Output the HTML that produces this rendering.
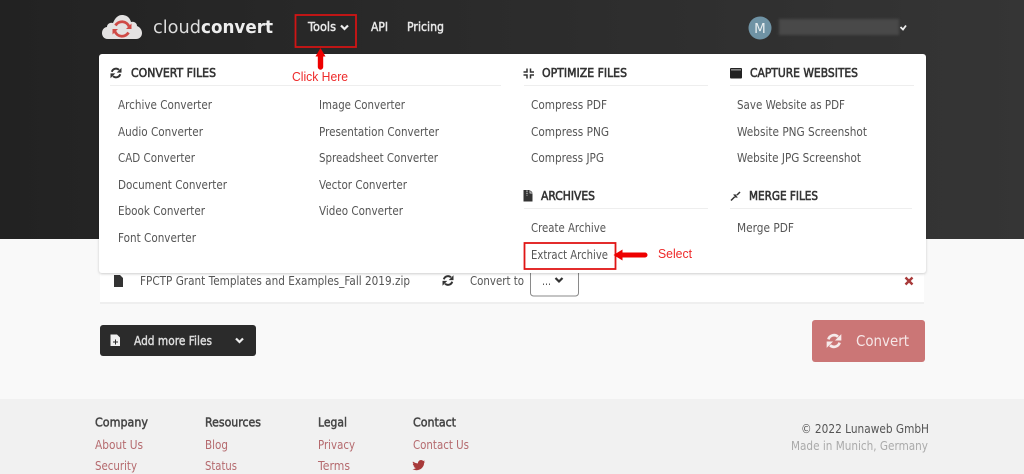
<!DOCTYPE html>
<html><head><meta charset="utf-8"><title>CloudConvert</title>
<style>
html,body{margin:0;padding:0;width:1024px;height:474px;overflow:hidden;background:#f9f9f9}
svg{display:block;filter:blur(.3px)}
text{font-family:"DejaVu Sans","Liberation Sans",sans-serif}
.i{font-size:12.5px;fill:#555}
.h{font-size:12.5px;fill:#333;stroke:#333;stroke-width:.6px}
.n{font-size:12.5px;fill:#e8e8e8;stroke:#e8e8e8;stroke-width:.5px}
.f{font-size:12.5px;fill:#b56a6e}
.fh{font-size:12.5px;fill:#444;stroke:#444;stroke-width:.5px}
.r{font-family:"Liberation Sans",sans-serif;font-size:13px;fill:#ee2a2a}
</style></head><body>
<svg width="1024" height="474" viewBox="0 0 1024 474" xmlns="http://www.w3.org/2000/svg">
<defs>
<linearGradient id="g" x1="0" x2="1" y1="0" y2="0"><stop offset="0" stop-color="#222"/><stop offset="1" stop-color="#353535"/></linearGradient>
<filter id="s" x="-2%" y="-5%" width="104%" height="110%"><feDropShadow dx="0" dy="1" stdDeviation="1.2" flood-color="#000" flood-opacity=".2"/></filter>
<filter id="b"><feGaussianBlur stdDeviation="1.2"/></filter>
<symbol id="sync" viewBox="0 0 12 12"><path d="M1.800 4.800A4.400 4.400 0 0 1 9 2.800" fill="none" stroke="currentColor" stroke-width="2"/><path d="M10.200 7.200A4.400 4.400 0 0 1 3 9.200" fill="none" stroke="currentColor" stroke-width="2"/><path d="M11.500 .8V5.600H6.700ZM.5 11.200V6.400H5.300Z" fill="currentColor"/></symbol>
</defs>
<rect width="1024" height="474" fill="#f9f9f9"/>
<rect width="1024" height="239" fill="url(#g)"/>
<rect y="399" width="1024" height="75" fill="#f1f1f1"/>

<!-- logo -->
<path d="M108 39C103 39 102 35 102 33C102 29 105 27 107 27C107 24 110 22 113 23C115 18 118 15 122 15C127 15 130 18 131 22C134 21 137 23 137 26C140 27 142 30 142 33C142 36 140 39 136 39Z" fill="#e4e2e2"/>
<path d="M115.500 25.500A7.500 7.500 0 0 1 129 26.500" fill="none" stroke="#cf4a46" stroke-width="2.800"/>
<path d="M128.500 32.500A7.500 7.500 0 0 1 115 31.500" fill="none" stroke="#cf4a46" stroke-width="2.800"/>
<path d="M131.500 23.500V29H126ZM112.500 34.500V29H118Z" fill="#cf4a46"/>
<text x="153" y="33" font-size="18" fill="#ddd" textLength="48" lengthAdjust="spacingAndGlyphs">cloud</text>
<text x="201" y="33" font-size="18" font-weight="bold" fill="#eee" textLength="72" lengthAdjust="spacingAndGlyphs">convert</text>

<!-- nav -->
<text class="n" x="308" y="31" textLength="28" lengthAdjust="spacingAndGlyphs">Tools</text>
<path d="M341 25.500l3.500 3.500 3.500-3.500" fill="none" stroke="#eee" stroke-width="2.200"/>
<text class="n" x="371" y="31" textLength="17" lengthAdjust="spacingAndGlyphs">API</text>
<text class="n" x="407" y="31" textLength="37" lengthAdjust="spacingAndGlyphs">Pricing</text>
<circle cx="760" cy="28" r="11.500" fill="#6f93a5"/>
<text x="760" y="33" font-size="13.500" fill="#e8eef0" text-anchor="middle">M</text>
<rect x="779" y="19" width="120" height="16" fill="#484848" filter="url(#b)"/>
<path d="M900.500 27l2.500 2.500 3-4" fill="none" stroke="#eee" stroke-width="1.800"/>

<!-- file row -->
<rect x="100" y="270" width="824" height="32" fill="#fff"/>
<rect x="100" y="302" width="824" height="2" fill="#efefef"/>
<path d="M114 275h6l3 3v9h-9Z" fill="#333"/>
<text class="i" x="140" y="285" textLength="270" lengthAdjust="spacingAndGlyphs">FPCTP Grant Templates and Examples_Fall 2019.zip</text>
<use href="#sync" x="442" y="274.500" width="12" height="12" color="#333"/>
<text class="i" x="470" y="285" textLength="54" lengthAdjust="spacingAndGlyphs">Convert to</text>
<rect x="530.500" y="262" width="48" height="34" rx="3" fill="#fff" stroke="#8a8a8a"/>
<text class="i" x="542" y="285" textLength="9" lengthAdjust="spacingAndGlyphs">...</text>
<path d="M555.500 278l3.500 3.500 3.500-3.500" fill="none" stroke="#333" stroke-width="2.200"/>
<path d="M905.500 277.500l7 7M912.500 277.500l-7 7" stroke="#a83a3a" stroke-width="2.400"/>

<!-- panel -->
<rect x="99" y="54" width="827" height="219" rx="3" fill="#fff" filter="url(#s)"/>
<use href="#sync" x="110" y="67" width="12" height="12" color="#333"/>
<text class="h" x="131" y="77" textLength="85" lengthAdjust="spacingAndGlyphs">CONVERT FILES</text>
<rect x="110" y="85" width="391" height="1" fill="#eee"/>
<text class="i" x="118" y="109" textLength="94" lengthAdjust="spacingAndGlyphs">Archive Converter</text>
<text class="i" x="118" y="136" textLength="85" lengthAdjust="spacingAndGlyphs">Audio Converter</text>
<text class="i" x="118" y="162" textLength="77" lengthAdjust="spacingAndGlyphs">CAD Converter</text>
<text class="i" x="118" y="189" textLength="109" lengthAdjust="spacingAndGlyphs">Document Converter</text>
<text class="i" x="118" y="215" textLength="87" lengthAdjust="spacingAndGlyphs">Ebook Converter</text>
<text class="i" x="118" y="242" textLength="78" lengthAdjust="spacingAndGlyphs">Font Converter</text>
<text class="i" x="319" y="109" textLength="86" lengthAdjust="spacingAndGlyphs">Image Converter</text>
<text class="i" x="319" y="136" textLength="120" lengthAdjust="spacingAndGlyphs">Presentation Converter</text>
<text class="i" x="319" y="162" textLength="119" lengthAdjust="spacingAndGlyphs">Spreadsheet Converter</text>
<text class="i" x="319" y="189" textLength="88" lengthAdjust="spacingAndGlyphs">Vector Converter</text>
<text class="i" x="319" y="215" textLength="84" lengthAdjust="spacingAndGlyphs">Video Converter</text>

<path d="M527 68.500v3.500h-3.500M530.500 68.500v3.500h3.500M527 78.500v-3.500h-3.500M530.500 78.500v-3.500h3.500" fill="none" stroke="#333" stroke-width="1.500"/>
<text class="h" x="542" y="77" textLength="85" lengthAdjust="spacingAndGlyphs">OPTIMIZE FILES</text>
<rect x="524" y="85" width="184" height="1" fill="#eee"/>
<text class="i" x="531" y="109" textLength="76" lengthAdjust="spacingAndGlyphs">Compress PDF</text>
<text class="i" x="531" y="136" textLength="78" lengthAdjust="spacingAndGlyphs">Compress PNG</text>
<text class="i" x="531" y="162" textLength="73" lengthAdjust="spacingAndGlyphs">Compress JPG</text>
<path d="M523.500 190h6.500l2.500 2.500v9h-9Z" fill="#333"/>
<path d="M527 190.500v5" stroke="#fff" stroke-width="1" stroke-dasharray="1.200 1"/>
<path d="M530 190v3h2.500" fill="none" stroke="#fff" stroke-width=".7"/>
<text class="h" x="541" y="200" textLength="54" lengthAdjust="spacingAndGlyphs">ARCHIVES</text>
<rect x="524" y="208" width="184" height="1" fill="#eee"/>
<text class="i" x="531" y="232" textLength="75" lengthAdjust="spacingAndGlyphs">Create Archive</text>
<text class="i" x="531" y="259" textLength="77" lengthAdjust="spacingAndGlyphs">Extract Archive</text>

<rect x="730" y="68" width="12" height="10.500" rx="1" fill="#222"/>
<rect x="731" y="69.500" width="10" height=".8" fill="#ddd"/>
<text class="h" x="750" y="77" textLength="108" lengthAdjust="spacingAndGlyphs">CAPTURE WEBSITES</text>
<rect x="730" y="85" width="184" height="1" fill="#eee"/>
<text class="i" x="737" y="109" textLength="108" lengthAdjust="spacingAndGlyphs">Save Website as PDF</text>
<text class="i" x="737" y="136" textLength="130" lengthAdjust="spacingAndGlyphs">Website PNG Screenshot</text>
<text class="i" x="737" y="162" textLength="124" lengthAdjust="spacingAndGlyphs">Website JPG Screenshot</text>
<path d="M731 200.500l3.500-3.500M737 195l3-3" stroke="#333" stroke-width="1.500"/>
<path d="M733 194.500l3.500 3.500v-3.500ZM738 197.500l-3.500-3.500v3.500Z" fill="#333"/>
<text class="h" x="749" y="200" textLength="69" lengthAdjust="spacingAndGlyphs">MERGE FILES</text>
<rect x="730" y="208" width="182" height="1" fill="#eee"/>
<text class="i" x="737" y="232" textLength="57" lengthAdjust="spacingAndGlyphs">Merge PDF</text>

<!-- buttons -->
<rect x="100" y="325" width="156" height="31" rx="3" fill="#2b2b2b"/>
<path d="M110.500 334.500h6.500l3 3v8.500h-9.500Z" fill="#f1f1f1"/>
<path d="M113 342h5M115.500 339.500v5" stroke="#2b2b2b" stroke-width="1"/>
<text x="134" y="345" font-size="12.500" fill="#ddd" stroke="#ddd" stroke-width=".45" textLength="78" lengthAdjust="spacingAndGlyphs">Add more Files</text>
<path d="M236 338.500l3.500 3.500 3.500-3.500" fill="none" stroke="#eee" stroke-width="2.200"/>
<rect x="812" y="320" width="113" height="42" rx="3" fill="#cb7676"/>
<use href="#sync" x="826" y="333" width="16" height="16" color="#f6eaea"/>
<text x="856" y="346" font-size="15.500" fill="#f6e6e6" textLength="53" lengthAdjust="spacingAndGlyphs">Convert</text>

<!-- footer -->
<text class="fh" x="95" y="426.500" textLength="53" lengthAdjust="spacingAndGlyphs">Company</text>
<text class="fh" x="205" y="426.500" textLength="56" lengthAdjust="spacingAndGlyphs">Resources</text>
<text class="fh" x="318" y="426.500" textLength="29" lengthAdjust="spacingAndGlyphs">Legal</text>
<text class="fh" x="413" y="426.500" textLength="43" lengthAdjust="spacingAndGlyphs">Contact</text>
<text class="f" x="95" y="449" textLength="48" lengthAdjust="spacingAndGlyphs">About Us</text>
<text class="f" x="95" y="470" textLength="42" lengthAdjust="spacingAndGlyphs">Security</text>
<text class="f" x="205" y="449" textLength="23" lengthAdjust="spacingAndGlyphs">Blog</text>
<text class="f" x="205" y="470" textLength="32" lengthAdjust="spacingAndGlyphs">Status</text>
<text class="f" x="318" y="449" textLength="37" lengthAdjust="spacingAndGlyphs">Privacy</text>
<text class="f" x="318" y="470" textLength="32" lengthAdjust="spacingAndGlyphs">Terms</text>
<text class="f" x="413" y="449" textLength="56" lengthAdjust="spacingAndGlyphs">Contact Us</text>
<path d="M412.800 461.500c1.500 1.200 3.500 1.800 5.200 1.900-.2-2 1.500-3.400 3-3.400 1 0 1.700.4 2.200 1l1.400-.6-.7 1.500 1.200-.3-1 1.300c0 3.700-3 7.300-7.400 7.300-1.600 0-3-.4-4.200-1.200 1.300.1 2.600-.3 3.500-1-1.100 0-2-.7-2.400-1.700h1.100c-1.100-.4-1.900-1.400-1.900-2.500l1.100.3c-1.100-.7-1.400-1.800-1-2.600Z" fill="#a83a3a"/>
<text x="801" y="433" font-size="12.500" fill="#555" textLength="128" lengthAdjust="spacingAndGlyphs">© 2022 Lunaweb GmbH</text>
<text x="791" y="450" font-size="12.500" fill="#aaa" textLength="137" lengthAdjust="spacingAndGlyphs">Made in Munich, Germany</text>

<!-- annotations -->
<rect x="295.500" y="15" width="60.500" height="32" fill="none" stroke="#d01515" stroke-width="1.800"/>
<path d="M320.500 48l5 8.500h-2.300v10.500a2.700 2.700 0 0 1-5.400 0v-10.500H315.500Z" fill="#ee0000"/>
<text class="r" x="292" y="81" textLength="56" lengthAdjust="spacingAndGlyphs">Click Here</text>
<rect x="524.500" y="243" width="91" height="26" fill="none" stroke="#e01515" stroke-width="1.800"/>
<path d="M613.500 255l9-5.500v3h22.500a2.500 2.500 0 0 1 0 5h-22.500v3Z" fill="#ee0000"/>
<text class="r" x="658" y="258" textLength="34" lengthAdjust="spacingAndGlyphs">Select</text>
</svg>
</body></html>
